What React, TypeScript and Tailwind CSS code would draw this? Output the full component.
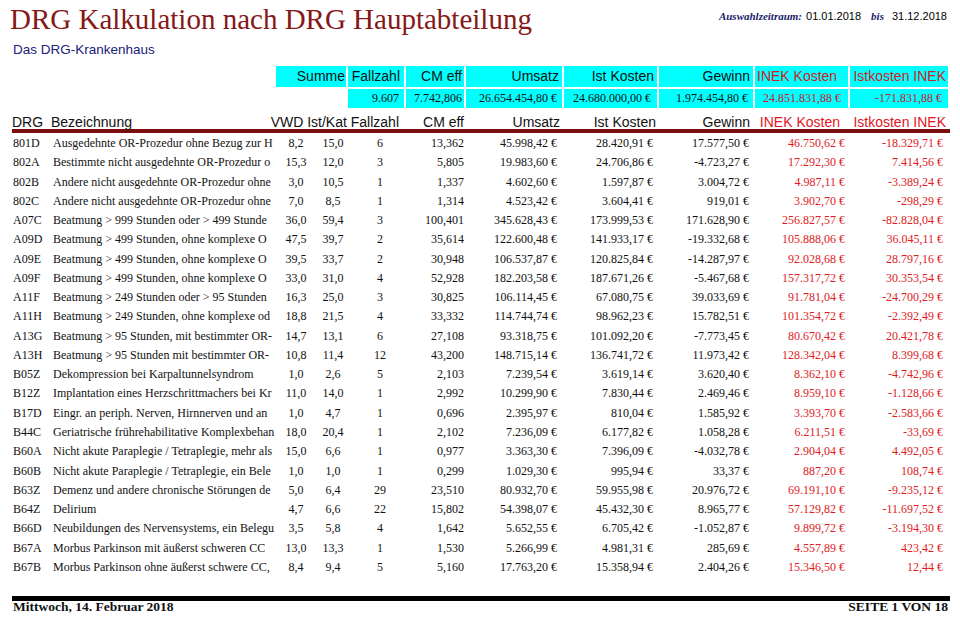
import React from "react";

type Row = [string, string, string, string, string, string, string, string, string, string, string];

const rows: Row[] = [
  ["801D", "Ausgedehnte OR-Prozedur ohne Bezug zur H", "8,2", "15,0", "6", "13,362", "45.998,42 €", "28.420,91 €", "17.577,50 €", "46.750,62 €", "-18.329,71 €"],
  ["802A", "Bestimmte nicht ausgedehnte OR-Prozedur o", "15,3", "12,0", "3", "5,805", "19.983,60 €", "24.706,86 €", "-4.723,27 €", "17.292,30 €", "7.414,56 €"],
  ["802B", "Andere nicht ausgedehnte OR-Prozedur ohne", "3,0", "10,5", "1", "1,337", "4.602,60 €", "1.597,87 €", "3.004,72 €", "4.987,11 €", "-3.389,24 €"],
  ["802C", "Andere nicht ausgedehnte OR-Prozedur ohne", "7,0", "8,5", "1", "1,314", "4.523,42 €", "3.604,41 €", "919,01 €", "3.902,70 €", "-298,29 €"],
  ["A07C", "Beatmung > 999 Stunden oder > 499 Stunde", "36,0", "59,4", "3", "100,401", "345.628,43 €", "173.999,53 €", "171.628,90 €", "256.827,57 €", "-82.828,04 €"],
  ["A09D", "Beatmung > 499 Stunden, ohne komplexe O", "47,5", "39,7", "2", "35,614", "122.600,48 €", "141.933,17 €", "-19.332,68 €", "105.888,06 €", "36.045,11 €"],
  ["A09E", "Beatmung > 499 Stunden, ohne komplexe O", "39,5", "33,7", "2", "30,948", "106.537,87 €", "120.825,84 €", "-14.287,97 €", "92.028,68 €", "28.797,16 €"],
  ["A09F", "Beatmung > 499 Stunden, ohne komplexe O", "33,0", "31,0", "4", "52,928", "182.203,58 €", "187.671,26 €", "-5.467,68 €", "157.317,72 €", "30.353,54 €"],
  ["A11F", "Beatmung > 249 Stunden oder > 95 Stunden", "16,3", "25,0", "3", "30,825", "106.114,45 €", "67.080,75 €", "39.033,69 €", "91.781,04 €", "-24.700,29 €"],
  ["A11H", "Beatmung > 249 Stunden, ohne komplexe od", "18,8", "21,5", "4", "33,332", "114.744,74 €", "98.962,23 €", "15.782,51 €", "101.354,72 €", "-2.392,49 €"],
  ["A13G", "Beatmung > 95 Stunden, mit bestimmter OR-", "14,7", "13,1", "6", "27,108", "93.318,75 €", "101.092,20 €", "-7.773,45 €", "80.670,42 €", "20.421,78 €"],
  ["A13H", "Beatmung > 95 Stunden mit bestimmter OR-", "10,8", "11,4", "12", "43,200", "148.715,14 €", "136.741,72 €", "11.973,42 €", "128.342,04 €", "8.399,68 €"],
  ["B05Z", "Dekompression bei Karpaltunnelsyndrom", "1,0", "2,6", "5", "2,103", "7.239,54 €", "3.619,14 €", "3.620,40 €", "8.362,10 €", "-4.742,96 €"],
  ["B12Z", "Implantation eines Herzschrittmachers bei Kr", "11,0", "14,0", "1", "2,992", "10.299,90 €", "7.830,44 €", "2.469,46 €", "8.959,10 €", "-1.128,66 €"],
  ["B17D", "Eingr. an periph. Nerven, Hirnnerven und an", "1,0", "4,7", "1", "0,696", "2.395,97 €", "810,04 €", "1.585,92 €", "3.393,70 €", "-2.583,66 €"],
  ["B44C", "Geriatrische frührehabilitative Komplexbehan", "18,0", "20,4", "1", "2,102", "7.236,09 €", "6.177,82 €", "1.058,28 €", "6.211,51 €", "-33,69 €"],
  ["B60A", "Nicht akute Paraplegie / Tetraplegie, mehr als", "15,0", "6,6", "1", "0,977", "3.363,30 €", "7.396,09 €", "-4.032,78 €", "2.904,04 €", "4.492,05 €"],
  ["B60B", "Nicht akute Paraplegie / Tetraplegie, ein Bele", "1,0", "1,0", "1", "0,299", "1.029,30 €", "995,94 €", "33,37 €", "887,20 €", "108,74 €"],
  ["B63Z", "Demenz und andere chronische Störungen de", "5,0", "6,4", "29", "23,510", "80.932,70 €", "59.955,98 €", "20.976,72 €", "69.191,10 €", "-9.235,12 €"],
  ["B64Z", "Delirium", "4,7", "6,6", "22", "15,802", "54.398,07 €", "45.432,30 €", "8.965,77 €", "57.129,82 €", "-11.697,52 €"],
  ["B66D", "Neubildungen des Nervensystems, ein Belegu", "3,5", "5,8", "4", "1,642", "5.652,55 €", "6.705,42 €", "-1.052,87 €", "9.899,72 €", "-3.194,30 €"],
  ["B67A", "Morbus Parkinson mit äußerst schweren CC", "13,0", "13,3", "1", "1,530", "5.266,99 €", "4.981,31 €", "285,69 €", "4.557,89 €", "423,42 €"],
  ["B67B", "Morbus Parkinson ohne äußerst schwere CC,", "8,4", "9,4", "5", "5,160", "17.763,20 €", "15.358,94 €", "2.404,26 €", "15.346,50 €", "12,44 €"],
];

function DataRow({ r }: { r: Row }) {
  return (
    <div className="grid grid-cols-[41px_227px_32px_42px_52px_58px_93px_96px_96px_96px_98px] h-[19.27px] leading-[19.27px] text-[12px] text-[#111] whitespace-nowrap">
      <div className="pl-[1px]">{r[0]}</div>
      <div className="overflow-hidden">{r[1]}</div>
      <div className="text-center">{r[2]}</div>
      <div className="text-center">{r[3]}</div>
      <div className="text-center">{r[4]}</div>
      <div className="text-right">{r[5]}</div>
      <div className="text-right">{r[6]}</div>
      <div className="text-right">{r[7]}</div>
      <div className="text-right">{r[8]}</div>
      <div className="text-right text-[#e01b24]">{r[9]}</div>
      <div className="text-right text-[#e01b24]">{r[10]}</div>
    </div>
  );
}

export default function App() {
  return (
    <div className="w-[960px] h-[636px] overflow-hidden bg-white pl-[12px] pr-[10px] font-['Liberation_Serif','Times_New_Roman',serif]">
      {/* Title row */}
      <div className="flex justify-between items-start pt-[3px]">
        <div className="-ml-[2px] text-[29px] leading-[33px] text-[#851818] whitespace-nowrap">
          DRG Kalkulation nach DRG Hauptabteilung
        </div>
        <div className="mt-[7px] pr-[3px] text-[11px] leading-[13px] whitespace-nowrap">
          <span className="font-bold italic text-[#1c1c6c]">Auswahlzeitraum:</span>
          <span className="ml-[4px] font-['Liberation_Sans',Arial,sans-serif] text-black">01.01.2018</span>
          <span className="ml-[10px] font-bold italic text-[#1c1c6c]">bis</span>
          <span className="ml-[8px] font-['Liberation_Sans',Arial,sans-serif] text-black">31.12.2018</span>
        </div>
      </div>

      {/* Subtitle */}
      <div className="mt-[6px] ml-[1px] text-[13.5px] leading-[16px] text-[#20207a] font-['Liberation_Sans',Arial,sans-serif]">
        Das DRG-Krankenhaus
      </div>

      {/* Summary table */}
      <div className="ml-[264px] mt-[8px] flex flex-col gap-[2px]">
        <div className="flex gap-[2px] h-[21px] leading-[21px] text-[14px] font-['Liberation_Sans',Arial,sans-serif] text-[#111] whitespace-nowrap">
          <div className="w-[70px] bg-[#00ffff] text-right pr-[1px]">Summe</div>
          <div className="w-[56px] bg-[#00ffff] text-right pr-[4px]">Fallzahl</div>
          <div className="w-[58px] bg-[#00ffff] text-right pr-[2px]">CM eff</div>
          <div className="w-[96px] bg-[#00ffff] text-right pr-[3px]">Umsatz</div>
          <div className="w-[93px] bg-[#00ffff] text-right pr-[3px]">Ist Kosten</div>
          <div className="w-[94px] bg-[#00ffff] text-right pr-[3px]">Gewinn</div>
          <div className="w-[93px] bg-[#00ffff] pl-[2px] text-[#d41c24]">INEK Kosten</div>
          <div className="w-[98px] bg-[#00ffff] text-right pr-[2px] text-[#d41c24]">Istkosten INEK</div>
        </div>
        <div className="flex gap-[2px] h-[19px] leading-[19px] text-[12px] text-[#111] whitespace-nowrap">
          <div className="w-[70px]"></div>
          <div className="w-[56px] bg-[#00ffff] text-right pr-[5px]">9.607</div>
          <div className="w-[58px] bg-[#00ffff] text-right pr-[2px]">7.742,806</div>
          <div className="w-[96px] bg-[#00ffff] text-right pr-[5px]">26.654.454,80 €</div>
          <div className="w-[93px] bg-[#00ffff] text-right pr-[6px]">24.680.000,00 €</div>
          <div className="w-[94px] bg-[#00ffff] text-right pr-[5px]">1.974.454,80 €</div>
          <div className="w-[93px] bg-[#00ffff] text-right pr-[7px] text-[#c8202a]">24.851.831,88 €</div>
          <div className="w-[98px] bg-[#00ffff] text-right pr-[6px] text-[#c8202a]">-171.831,88 €</div>
        </div>
      </div>

      {/* Column header */}
      <div className="mt-[7px] grid grid-cols-[39px_209px_139px_65px_96px_96px_94px_90px_106px] h-[14px] leading-[14px] text-[14px] font-['Liberation_Sans',Arial,sans-serif] text-[#111] whitespace-nowrap">
        <div>DRG</div>
        <div>Bezeichnung</div>
        <div className="text-right">VWD Ist/Kat Fallzahl</div>
        <div className="text-right">CM eff</div>
        <div className="text-right">Umsatz</div>
        <div className="text-right">Ist Kosten</div>
        <div className="text-right">Gewinn</div>
        <div className="text-right text-[#e3141e]">INEK Kosten</div>
        <div className="text-right text-[#e3141e]">Istkosten INEK</div>
      </div>
      <div className="h-[3.5px] bg-[#7a0e0e]"></div>

      {/* Data rows */}
      <div className="pt-[1.5px]">
        {rows.map((r) => (
          <DataRow key={r[0]} r={r} />
        ))}
      </div>

      {/* Footer */}
      <div className="mt-[19px] h-[5px] bg-black"></div>
      <div className="flex justify-between h-[14px] leading-[12px] text-[13.5px] font-bold text-[#111] whitespace-nowrap">
        <div className="pl-[1px]">Mittwoch, 14. Februar 2018</div>
        <div className="pr-[2px]">SEITE 1 VON 18</div>
      </div>
    </div>
  );
}
